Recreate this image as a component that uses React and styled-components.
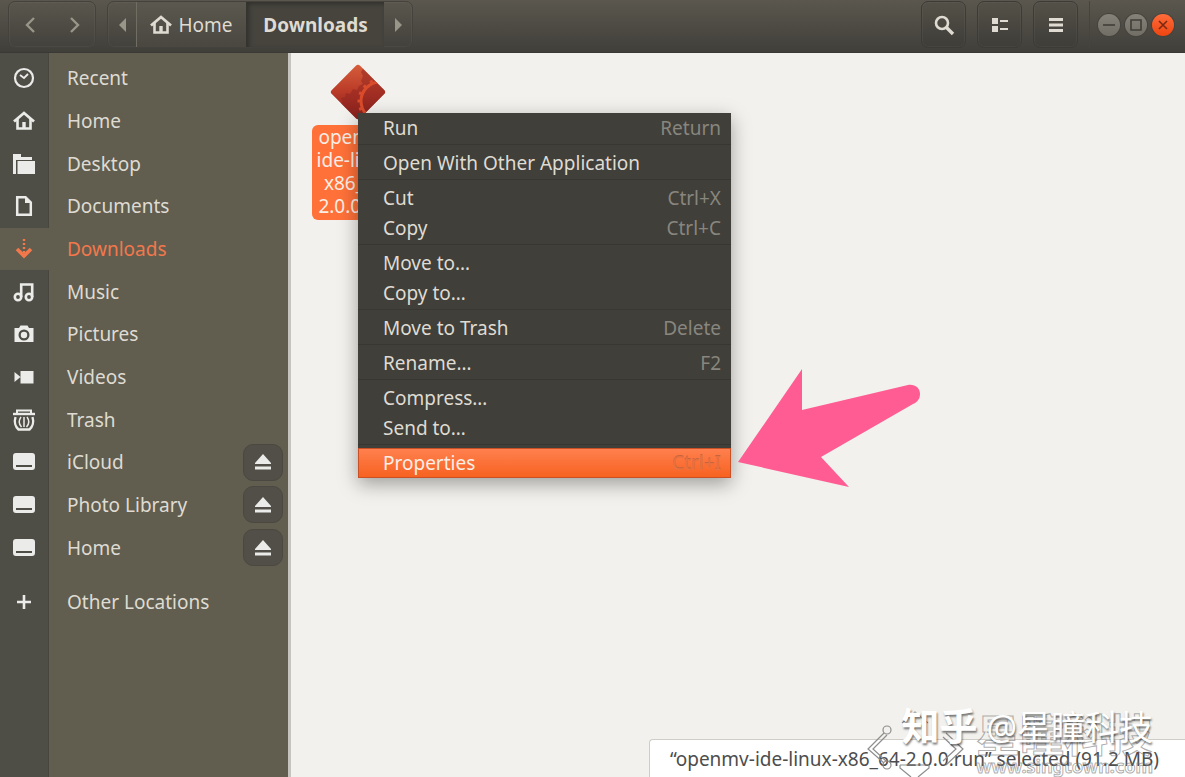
import React, { useState } from "react";
import styled, { createGlobalStyle, css } from "styled-components";

const places = [
  { id: "recent", name: "Recent", icon: ClockIcon },
  { id: "home", name: "Home", icon: HomeIcon },
  { id: "desktop", name: "Desktop", icon: FolderIcon },
  { id: "documents", name: "Documents", icon: DocumentIcon },
  { id: "downloads", name: "Downloads", icon: DownloadIcon },
  { id: "music", name: "Music", icon: MusicIcon },
  { id: "pictures", name: "Pictures", icon: CameraIcon },
  { id: "videos", name: "Videos", icon: VideoIcon },
  { id: "trash", name: "Trash", icon: TrashIcon },
  { id: "icloud", name: "iCloud", icon: DriveIcon, ejectable: true },
  { id: "photos", name: "Photo Library", icon: DriveIcon, ejectable: true },
  { id: "shared", name: "Home", icon: DriveIcon, ejectable: true },
];

const menuGroups = [
  [{ label: "Run", keys: "Return" }],
  [{ label: "Open With Other Application" }],
  [
    { label: "Cut", keys: "Ctrl+X" },
    { label: "Copy", keys: "Ctrl+C" },
  ],
  [{ label: "Move to…" }, { label: "Copy to…" }],
  [{ label: "Move to Trash", keys: "Delete" }],
  [{ label: "Rename…", keys: "F2" }],
  [{ label: "Compress…" }, { label: "Send to…" }],
  [{ label: "Properties", keys: "Ctrl+I" }],
];

export default function App() {
  const [place, setPlace] = useState("downloads");
  const [activeItem, setActiveItem] = useState("Properties");

  return (
    <Window>
      <GlobalStyle />
      <HeaderBar>
        <ButtonGroup>
          <NavButton aria-label="Back">
            <ChevronIcon d="m15 5-7 7 7 7" />
          </NavButton>
          <NavButton aria-label="Forward">
            <ChevronIcon d="m9 5 7 7-7 7" />
          </NavButton>
        </ButtonGroup>
        <PathBar aria-label="Path">
          <PathArrow aria-label="Scroll left">
            <ArrowIcon d="M8 1v14L1 8z" />
          </PathArrow>
          <PathButton>
            <HomeIcon />
            Home
          </PathButton>
          <PathButton $current>Downloads</PathButton>
          <PathArrow aria-label="Scroll right">
            <ArrowIcon d="M1 1v14l7-7z" />
          </PathArrow>
        </PathBar>
        <Tools>
          <ToolButton aria-label="Search">
            <SearchIcon />
          </ToolButton>
          <ToolButton aria-label="View">
            <ListIcon />
          </ToolButton>
          <ToolButton aria-label="Menu">
            <BarsIcon />
          </ToolButton>
        </Tools>
        <WindowControls>
          <WindowButton aria-label="Minimize">
            <ControlIcon d="M5 11h12" />
          </WindowButton>
          <WindowButton aria-label="Maximize">
            <ControlIcon d="M6 6h10v10H6z" />
          </WindowButton>
          <WindowButton $close aria-label="Close">
            <ControlIcon d="m7 7 8 8m0-8-8 8" />
          </WindowButton>
        </WindowControls>
      </HeaderBar>

      <Body>
        <Sidebar>
          <PlaceList>
            {places.map(({ id, name, icon: Icon, ejectable }) => (
              <PlaceRow key={id} $active={id === place}>
                <PlaceButton onClick={() => setPlace(id)}>
                  <PlaceIcon>
                    <Icon />
                  </PlaceIcon>
                  {name}
                </PlaceButton>
                {ejectable && (
                  <EjectButton aria-label={`Eject ${name}`}>
                    <EjectIcon />
                  </EjectButton>
                )}
              </PlaceRow>
            ))}
          </PlaceList>
          <OtherPlaces>
            <PlaceButton>
              <PlaceIcon>
                <PlusIcon />
              </PlaceIcon>
              Other Locations
            </PlaceButton>
          </OtherPlaces>
        </Sidebar>

        <Files>
          <FileItem>
            <RunFileIcon />
            <FileName>
              openmv-
              <br />
              ide-linux-
              <br />
              x86_64-
              <br />
              2.0.0.run
            </FileName>
          </FileItem>

          <ContextMenu role="menu">
            {menuGroups.map((group) => (
              <MenuGroup key={group[0].label}>
                {group.map(({ label, keys }) => (
                  <MenuItem
                    key={label}
                    role="menuitem"
                    $active={label === activeItem}
                    onMouseEnter={() => setActiveItem(label)}
                  >
                    {label}
                    {keys && <kbd>{keys}</kbd>}
                  </MenuItem>
                ))}
              </MenuGroup>
            ))}
          </ContextMenu>

          <Pointer viewBox="0 0 184 120" aria-hidden="true">
            <path
              d="M1 94 65 1v41L171 17c7-1 12 3 12 9 0 4-2 8-7 10L84 89l28 30z"
              fill="#ff5c93"
            />
          </Pointer>

          <StatusBar>
            “openmv-ide-linux-x86_64-2.0.0.run” selected (91.2 MB)
          </StatusBar>

          <Brand>
            <BrandMark />
            <BrandName>
              星瞳科技
              <small>www.singtown.com</small>
            </BrandName>
          </Brand>
          <Credit>
            <strong>知乎</strong> @星瞳科技
          </Credit>
        </Files>
      </Body>
    </Window>
  );
}

function ChevronIcon({ d }) {
  return (
    <svg width="24" height="24" viewBox="0 0 24 24" fill="none" stroke="currentColor" strokeWidth="2.4">
      <path d={d} />
    </svg>
  );
}

function ArrowIcon({ d }) {
  return (
    <svg width="9" height="16" viewBox="0 0 9 16" fill="currentColor">
      <path d={d} />
    </svg>
  );
}

function ControlIcon({ d }) {
  return (
    <svg width="22" height="22" viewBox="0 0 22 22" fill="none" stroke="currentColor" strokeWidth="1.6">
      <path d={d} />
    </svg>
  );
}

function SearchIcon() {
  return (
    <svg width="22" height="22" viewBox="0 0 22 22" fill="none" stroke="currentColor">
      <circle cx="9" cy="9" r="6" strokeWidth="2.6" />
      <path d="m13 13 7 7" strokeWidth="3.4" />
    </svg>
  );
}

function ListIcon() {
  return (
    <svg width="18" height="16" viewBox="0 0 18 16" fill="currentColor">
      <path d="M1 1h6v6H1zm0 8h6v6H1zm8-6h8v2H9zm0 8h8v2H9z" />
    </svg>
  );
}

function BarsIcon() {
  return (
    <svg width="16" height="16" viewBox="0 0 16 16" fill="currentColor">
      <path d="M1 1h14v3H1zm0 5.500h14v3H1zM1 12h14v3H1z" />
    </svg>
  );
}

function ClockIcon() {
  return (
    <svg width="22" height="22" viewBox="0 0 22 22" fill="none" stroke="currentColor">
      <circle cx="11" cy="11" r="9" strokeWidth="2.2" />
      <path d="m7 8 4 3 4-4" strokeWidth="1.8" />
    </svg>
  );
}

function HomeIcon() {
  return (
    <svg width="22" height="22" viewBox="0 0 22 22" fill="none" stroke="currentColor">
      <path d="m1 11.500 10-8.500 10 8.500" strokeWidth="2.8" />
      <path d="M4.500 9v9.500h13V9" strokeWidth="2.6" />
      <path d="M11 12v7" strokeWidth="3.4" />
    </svg>
  );
}

function FolderIcon() {
  return (
    <svg width="22" height="22" viewBox="0 0 22 22" fill="currentColor">
      <path d="M0 1h8v3h11v3H3v14H0z" />
      <path d="M4.500 8H22v13H4.500z" />
    </svg>
  );
}

function DocumentIcon() {
  return (
    <svg width="22" height="22" viewBox="0 0 22 22" fill="none" stroke="currentColor" strokeWidth="2.5">
      <path d="M4.200 2.200h8.300l5.300 5.300v12.300H4.200z" />
      <path d="M12 2v6h6z" fill="currentColor" stroke="none" />
    </svg>
  );
}

function DownloadIcon() {
  return (
    <svg width="22" height="22" viewBox="0 0 22 22" fill="none" stroke="currentColor">
      <path d="M11 1v15" strokeWidth="2.4" strokeDasharray="2 2" />
      <path d="m4 11 7 7 7-7" strokeWidth="3.6" />
    </svg>
  );
}

function MusicIcon() {
  return (
    <svg width="22" height="22" viewBox="0 0 22 22" fill="none" stroke="currentColor" strokeWidth="2.6">
      <circle cx="5" cy="16" r="3.2" />
      <circle cx="16" cy="16" r="3.2" />
      <path d="M8.200 16V3.500h11V16" />
    </svg>
  );
}

function CameraIcon() {
  return (
    <svg width="22" height="22" viewBox="0 0 22 22" fill="currentColor" fillRule="evenodd">
      <path d="M1.500 5H6l1.500-2.500h7L16 5h4.500v14h-19zM11 6.500a5.500 5.500 0 1 0 0 11 5.500 5.500 0 0 0 0-11m0 2.300a3.200 3.200 0 1 1 0 6.400 3.200 3.200 0 0 1 0-6.400" />
    </svg>
  );
}

function VideoIcon() {
  return (
    <svg width="22" height="22" viewBox="0 0 22 22" fill="currentColor">
      <path d="M7.500 5h13v12.500h-13zM1.500 6l6 5-6 5z" />
    </svg>
  );
}

function TrashIcon() {
  return (
    <svg width="22" height="22" viewBox="0 0 22 22" fill="none" stroke="currentColor">
      <path d="M0 5h22" strokeWidth="2.4" />
      <path d="M4 4V1.500h14V4" strokeWidth="2" />
      <path d="M2.500 8c-1.500 5 0 10 3 12.500h11c3-2.500 4.500-7.500 3-12.500" strokeWidth="2.4" />
      <path d="M8 8c-2.200 3-2.200 7 .5 10M14 8c2.200 3 2.200 7-.5 10M11 8v10" strokeWidth="1.5" />
    </svg>
  );
}

function DriveIcon() {
  return (
    <svg width="22" height="22" viewBox="0 0 22 22" fill="currentColor" fillRule="evenodd">
      <path d="M3 2h16a3 3 0 0 1 3 3v11a3 3 0 0 1-3 3H3a3 3 0 0 1-3-3V5a3 3 0 0 1 3-3m0 12v2h16v-2z" />
    </svg>
  );
}

function PlusIcon() {
  return (
    <svg width="14" height="14" viewBox="0 0 14 14" stroke="currentColor" strokeWidth="2.6">
      <path d="M7 0v14M0 7h14" />
    </svg>
  );
}

function EjectIcon() {
  return (
    <svg width="16" height="16" viewBox="0 0 16 16" fill="currentColor">
      <path d="m8 0 8 9v1H0V9zM0 12.500h16v3H0z" />
    </svg>
  );
}

function RunFileIcon() {
  return (
    <svg width="58" height="58" viewBox="0 0 58 58" aria-hidden="true">
      <defs>
        <linearGradient id="run" x1="0" y1="0" x2="0" y2="1">
          <stop offset="0" stopColor="#d85f3c" />
          <stop offset="0.5" stopColor="#b93a27" />
          <stop offset="1" stopColor="#7d1c1c" />
        </linearGradient>
        <clipPath id="diamond">
          <rect x="9" y="9" width="40" height="40" rx="3" transform="rotate(45 29 29)" />
        </clipPath>
      </defs>
      <g clipPath="url(#diamond)">
        <rect width="58" height="58" fill="url(#run)" />
        <path
          d="m35 4-3 5 2 4-2 5 2 3-4 2-2 4-4-1-3 5-4-1-1 4-4 1 2 4-3 3 18 16 29-29z"
          fill="#8e241f"
          opacity="0.5"
        />
        <circle cx="51" cy="38" r="19" fill="none" stroke="#d94c2b" strokeWidth="3" />
        <circle cx="51" cy="38" r="21" fill="none" stroke="#d94c2b" strokeWidth="3" strokeDasharray="3 5" />
      </g>
    </svg>
  );
}

function BrandMark() {
  return (
    <svg width="98" height="66" viewBox="0 0 98 66" fill="none" stroke="#8d8d8d" strokeWidth="1.2">
      <circle cx="21" cy="19" r="4" />
      <circle cx="21" cy="54" r="4" />
      <path d="M18 22 2 38l16 14M21 24 7 38l13 12" />
      <path d="m80 22 17 16-17 16M77 26l13 12-13 12" />
      <path d="m36 12 13-11 13 11M34 54h29M34 54v3l11 9M63 54v3l-11 9" />
    </svg>
  );
}

const GlobalStyle = createGlobalStyle`
  * {
    box-sizing: border-box;
  }
  body {
    margin: 0;
    font-family: "Noto Sans", "Noto Sans CJK SC", sans-serif;
    font-size: 19px;
    color: #dfdbd2;
  }
  button {
    margin: 0;
    padding: 0;
    border: none;
    background: none;
    font: inherit;
    color: inherit;
  }
  svg {
    display: block;
    flex-shrink: 0;
  }
`;

const Window = styled.div`
  display: flex;
  flex-direction: column;
  min-height: 100vh;
  background: #f2f1ed;
`;

const HeaderBar = styled.header`
  display: flex;
  height: 53px;
  padding: 1px 11px 4px 8px;
  background: linear-gradient(#5b574e, #403f3a);
  border-bottom: 1px solid #3a3935;
`;

const frame = css`
  border: 1px solid #44423c;
  border-radius: 7px;
  box-shadow: inset 0 0 0 1px rgba(255, 255, 255, 0.04);
`;

const ButtonGroup = styled.div`
  ${frame}
  display: flex;
  width: 88px;
  margin-right: 11px;
`;

const NavButton = styled.button`
  flex: 1;
  display: flex;
  align-items: center;
  justify-content: center;
  color: #989589;
`;

const PathBar = styled.nav`
  ${frame}
  display: flex;
`;

const PathArrow = styled.button`
  display: flex;
  align-items: center;
  justify-content: center;
  width: 28px;
  color: #989589;
`;

const PathButton = styled.button`
  display: flex;
  align-items: center;
  justify-content: center;
  gap: 6px;
  width: 110px;
  background: linear-gradient(#5b584f, #494740);
  border-left: 1px solid #706d63;

  ${({ $current }) =>
    $current &&
    css`
      width: 138px;
      font-weight: bold;
      background: #46443d;
      border-left: 1px solid #35342f;
      box-shadow: inset 2px 2px 4px rgba(0, 0, 0, 0.3);
    `}
`;

const Tools = styled.div`
  display: flex;
  gap: 11px;
  margin-left: auto;
  padding-right: 11px;
  border-right: 1px solid #46443e;
`;

const ToolButton = styled.button`
  ${frame}
  display: flex;
  align-items: center;
  justify-content: center;
  width: 45px;
  border-color: #3d3b36;
  background: rgba(0, 0, 0, 0.06);
`;

const WindowControls = styled.div`
  display: flex;
  align-items: center;
  gap: 5px;
  padding-left: 8px;
`;

const WindowButton = styled.button`
  width: 22px;
  height: 22px;
  border-radius: 50%;
  color: ${({ $close }) => ($close ? "#7b2a12" : "#403e38")};
  background: ${({ $close }) =>
    $close
      ? "linear-gradient(#ff6c3a, #ee4510)"
      : "linear-gradient(#85827a, #716e66)"};
  box-shadow: 0 0 0 1px #45433d;
`;

const Body = styled.div`
  flex: 1;
  display: flex;
`;

const Sidebar = styled.aside`
  flex: 0 0 291px;
  padding-top: 4px;
  border-right: 3px solid #c6c4bf;
  background: linear-gradient(
    to right,
    #4f4e46 48px,
    #47463f 48px,
    #47463f 49px,
    #615e50 49px
  );
`;

const PlaceList = styled.ul`
  display: grid;
  grid-auto-rows: 1fr;
  height: 512px;
  margin: 0 0 11px;
  padding: 0;
  list-style: none;
`;

const PlaceRow = styled.li`
  display: flex;
  align-items: center;
  padding-right: 5px;

  ${({ $active }) =>
    $active &&
    css`
      background: #615e50;
      color: #f2784b;

      svg {
        color: #f2784b;
      }
    `}
`;

const OtherPlaces = styled.div`
  display: flex;
  height: 43px;
`;

const PlaceButton = styled.button`
  flex: 1;
  display: flex;
  align-items: center;
  gap: 19px;
  text-align: left;
  white-space: nowrap;
`;

const PlaceIcon = styled.span`
  display: flex;
  justify-content: center;
  width: 48px;
  color: #ebebe9;
`;

const EjectButton = styled.button`
  display: flex;
  align-items: center;
  justify-content: center;
  width: 40px;
  height: 37px;
  border: 1px solid #4a4841;
  border-radius: 10px;
  background: #514f47;
  color: #ebebe9;
`;

const Files = styled.main`
  position: relative;
  flex: 1;
  padding: 10px 21px;
  overflow: hidden;
`;

const FileItem = styled.figure`
  display: flex;
  flex-direction: column;
  align-items: center;
  width: 92px;
  margin: 0;
`;

const FileName = styled.figcaption`
  align-self: stretch;
  margin-top: 4px;
  padding: 1px 0 2px;
  border-radius: 6px;
  background: #ff7139;
  color: #fbeee6;
  line-height: 23px;
  text-align: center;
`;

const ContextMenu = styled.div`
  position: absolute;
  top: 60px;
  left: 67px;
  width: 373px;
  background: #403f3a;
  box-shadow: 0 6px 18px rgba(0, 0, 0, 0.35);
`;

const MenuGroup = styled.div`
  & + & {
    padding-top: 3px;
    border-top: 1px solid #383731;
    margin-top: 1px;
  }
`;

const MenuItem = styled.button`
  display: flex;
  align-items: center;
  justify-content: space-between;
  width: 100%;
  height: 30px;
  padding: 0 10px 0 25px;

  kbd {
    font-family: inherit;
    color: #88867e;
  }

  ${({ $active }) =>
    $active &&
    css`
      background: linear-gradient(#ff8150, #f7611f);
      box-shadow: inset 0 0 0 1px #c95125;
      color: #fbeee6;

      kbd {
        color: #e9713f;
        text-shadow: 0 -1px 0 #c4653f;
      }
    `}
`;

const Pointer = styled.svg`
  position: absolute;
  top: 315px;
  left: 446px;
  width: 184px;
  height: 120px;
`;

const StatusBar = styled.output`
  position: absolute;
  right: 0;
  bottom: 0;
  padding: 5px 26px 3px 20px;
  border: 1px solid #cfcdc8;
  border-width: 1px 0 0 1px;
  border-radius: 4px 0 0;
  background: #fff;
  color: #4d4d4d;
  line-height: 29px;
  white-space: nowrap;
`;

const Brand = styled.div`
  position: absolute;
  right: 32px;
  bottom: 0;
  display: flex;
  align-items: flex-end;
  gap: 12px;
`;

const BrandName = styled.div`
  display: flex;
  flex-direction: column;
  font-size: 44px;
  font-weight: bold;
  line-height: 40px;
  color: transparent;
  -webkit-text-stroke: 1px rgba(120, 120, 120, 0.6);

  small {
    font-size: 18px;
    line-height: 22px;
  }
`;

const Credit = styled.p`
  position: absolute;
  right: 32px;
  bottom: 28px;
  margin: 0;
  color: #fff;
  font-size: 34px;
  line-height: 44px;
  text-shadow: 1px 2px 2px rgba(0, 0, 0, 0.5);

  strong {
    font-size: 38px;
    font-weight: bold;
  }
`;
